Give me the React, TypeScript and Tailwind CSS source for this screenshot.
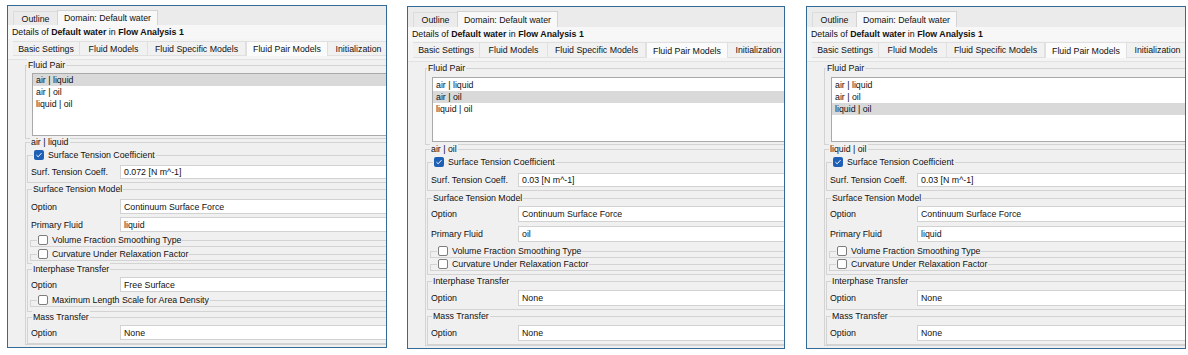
import React from 'react';

type V = 'a' | 'b';

const cfg = {
  a: {
    panel: 'w-[380px]',
    strip: 'h-[19px]',
    tabTop: 'h-[14px]',
    tabTopActive: 'h-[15px]',
    sub: 'h-[21px]',
    tab: 'h-[15px]',
    fpMt: 'mt-[5px]',
    listMt: 'mt-[2px]',
    listH: 'h-[63px]',
    listPt: 'pt-0',
    fpPb: 'pb-[2px]',
    pairMt: 'mt-[3px]',
    stcMt: 'mt-[7px]',
    coefMt: 'mt-[4px]',
    coefH: 'h-[14px]',
    stcPb: 'pb-[3px]',
    stmMt: 'mt-[6px]',
    optMt: 'mt-[4px]',
    rowH: 'h-[15px]',
    primMt: 'mt-[3px]',
    volMt: 'mt-[8px]',
    curvMt: 'mt-[7px]',
    stmPb: 'pb-[2px]',
    itMt: 'mt-[5px]',
    itOptMt: 'mt-[2px]',
    maxMt: 'mt-[8px]',
    itPb: 'pb-[4px]',
    massMt: 'mt-[5px]',
    massOptMt: 'mt-[2px]',
    massPb: 'pb-[3px]',
    lw: 'w-[92px]',
  },
  b: {
    panel: 'w-[378px]',
    strip: 'h-[20px]',
    tabTop: 'h-[15px]',
    tabTopActive: 'h-[16px]',
    sub: 'h-[21px]',
    tab: 'h-[16px]',
    fpMt: 'mt-[6px]',
    listMt: 'mt-[3px]',
    listH: 'h-[65px]',
    listPt: 'pt-[1px]',
    fpPb: 'pb-[2px]',
    pairMt: 'mt-[4px]',
    stcMt: 'mt-[7px]',
    coefMt: 'mt-[5px]',
    coefH: 'h-[14px]',
    stcPb: 'pb-[3px]',
    stmMt: 'mt-[7px]',
    optMt: 'mt-[2px]',
    rowH: 'h-[16px]',
    primMt: 'mt-[4px]',
    volMt: 'mt-[9px]',
    curvMt: 'mt-[6px]',
    stmPb: 'pb-[3px]',
    itMt: 'mt-[6px]',
    itOptMt: 'mt-[3px]',
    maxMt: 'mt-[8px]',
    itPb: 'pb-[3px]',
    massMt: 'mt-[6px]',
    massOptMt: 'mt-[3px]',
    massPb: 'pb-[3px]',
    lw: 'w-[90px]',
  },
};

const panels = [
  { v: 'a' as V, sel: 0, pair: 'air | liquid', coef: '0.072 [N m^-1]', prim: 'liquid', it: 'Free Surface', maxLen: true, cls: 'mt-0' },
  { v: 'b' as V, sel: 1, pair: 'air | oil', coef: '0.03 [N m^-1]', prim: 'oil', it: 'None', maxLen: false, cls: 'mt-[1px] ml-[20px]' },
  { v: 'b' as V, sel: 2, pair: 'liquid | oil', coef: '0.03 [N m^-1]', prim: 'liquid', it: 'None', maxLen: false, cls: 'mt-[1px] ml-[21px] w-[380px]' },
];

const pairs = ['air | liquid', 'air | oil', 'liquid | oil'];
const subTabs = [
  { label: 'Basic Settings', w: 'w-[67px]' },
  { label: 'Fluid Models', w: 'w-[68px]' },
  { label: 'Fluid Specific Models', w: 'w-[98px]' },
  { label: 'Fluid Pair Models', w: 'w-[82px]' },
  { label: 'Initialization', w: 'w-[62px]' },
];

const Check = ({ on }: { on: boolean }) =>
  on ? (
    <span className="flex h-[10px] w-[10px] shrink-0 items-center justify-center rounded-[2px] bg-[#1e60b6]">
      <svg viewBox="0 0 10 10" className="h-[8px] w-[8px]">
        <path d="M1.8 5.2 L4 7.2 L8.2 2.6" fill="none" stroke="#ffffff" strokeWidth="1.2" />
      </svg>
    </span>
  ) : (
    <span className="h-[10px] w-[10px] shrink-0 rounded-[2px] border border-[#7d7d7d] bg-white" />
  );

const Legend = ({ children, ml }: { children: React.ReactNode; ml: string }) => (
  <div className={`-mt-[7px] flex h-[12px] w-fit items-center gap-[4px] bg-[#f0f0f0] px-[1px] leading-[12px] ${ml}`}>
    {children}
  </div>
);

const Row = ({ label, value, h, mt, lw }: { label: string; value: string; h: string; mt: string; lw: string }) => (
  <div className={`flex items-stretch ${h} ${mt}`}>
    <div className={`flex items-center pl-[3px] ${lw}`}>{label}</div>
    <div className="flex flex-1 items-center border-y border-l border-[#d2d2d2] bg-white pl-[3px]">{value}</div>
  </div>
);

const Collapsed = ({ label, mt }: { label: string; mt: string }) => (
  <div className={`ml-[2px] border border-r-0 border-[#d3d3d3] ${mt}`}>
    <Legend ml="ml-[6px]">
      <Check on={false} />
      <span>{label}</span>
    </Legend>
  </div>
);

const Panel = ({ p }: { p: (typeof panels)[number] }) => {
  const c = cfg[p.v];
  return (
    <div className={`h-[343px] shrink-0 overflow-hidden border border-[#346a98] bg-[#f0f0f0] ${c.panel} ${p.cls}`}>
      <div className={`flex items-end bg-[#ebebeb] pl-[5px] ${c.strip}`}>
        <div className={`flex w-[44px] items-center justify-center border-t border-l border-[#dcdcdc] ${c.tabTop}`}>Outline</div>
        <div className={`flex w-[101px] items-center justify-center border border-b-0 border-[#d4d4d4] bg-[#f8f8f8] ${c.tabTopActive}`}>
          Domain: Default water
        </div>
      </div>
      <div className="flex h-[14px] items-center bg-[#f7f7f7] pl-[4px]">
        <span className="whitespace-nowrap">
          Details of <b>Default water</b> in <b>Flow Analysis 1</b>
        </span>
      </div>
      <div className={`flex items-end border-b border-[#e2e2e2] bg-[#f4f4f4] pl-[5px] ${c.sub}`}>
        <div className="mb-[3px] flex">
          {subTabs.map((t, i) => (
            <div
              key={t.label}
              className={`flex shrink-0 items-center justify-center whitespace-nowrap border border-[#e0e0e0] ${t.w} ${c.tab} ${
                i === 3 ? 'border-b-0 bg-[#fbfbfb]' : 'border-l-0 bg-[#f1f1f1]'
              } ${i === 4 ? 'border-l-0' : ''}`}
            >
              {t.label}
            </div>
          ))}
        </div>
      </div>

      <div className="w-[440px] whitespace-nowrap">
        {/* Fluid Pair */}
        <div className={`ml-[17px] border border-r-0 border-[#d3d3d3] ${c.fpMt} ${c.fpPb}`}>
          <Legend ml="ml-[1px]">Fluid Pair</Legend>
          <div className={`ml-[6px] border border-r-0 border-[#a9a9a9] bg-white ${c.listMt} ${c.listH} ${c.listPt}`}>
            {pairs.map((s, i) => (
              <div key={s} className={`flex h-[12px] items-center pl-[3px] ${i === p.sel ? 'bg-[#d9d9d9]' : ''}`}>
                {s}
              </div>
            ))}
          </div>
        </div>

        {/* Pair */}
        <div className={`ml-[17px] border border-r-0 border-[#d3d3d3] ${c.pairMt}`}>
          <Legend ml="ml-[4px]">{p.pair}</Legend>

          <div className={`ml-[1px] border border-r-0 border-[#d3d3d3] ${c.stcMt} ${c.stcPb}`}>
            <Legend ml="ml-[5px]">
              <Check on />
              <span>Surface Tension Coefficient</span>
            </Legend>
            <Row label="Surf. Tension Coeff." value={p.coef} h={c.coefH} mt={c.coefMt} lw={c.lw} />
          </div>

          <div className={`ml-[1px] border border-r-0 border-[#d3d3d3] ${c.stmMt} ${c.stmPb}`}>
            <Legend ml="ml-[4px]">Surface Tension Model</Legend>
            <Row label="Option" value="Continuum Surface Force" h={c.rowH} mt={c.optMt} lw={c.lw} />
            <Row label="Primary Fluid" value={p.prim} h={c.rowH} mt={c.primMt} lw={c.lw} />
            <Collapsed label="Volume Fraction Smoothing Type" mt={c.volMt} />
            <Collapsed label="Curvature Under Relaxation Factor" mt={c.curvMt} />
          </div>

          <div className={`ml-[1px] border border-r-0 border-[#d3d3d3] ${c.itMt} ${c.itPb}`}>
            <Legend ml="ml-[4px]">Interphase Transfer</Legend>
            <Row label="Option" value={p.it} h={c.rowH} mt={c.itOptMt} lw={c.lw} />
            {p.maxLen && <Collapsed label="Maximum Length Scale for Area Density" mt={c.maxMt} />}
          </div>

          <div className={`ml-[1px] border border-r-0 border-[#d3d3d3] ${c.massMt} ${c.massPb}`}>
            <Legend ml="ml-[4px]">Mass Transfer</Legend>
            <Row label="Option" value="None" h={c.rowH} mt={c.massOptMt} lw={c.lw} />
          </div>
        </div>
      </div>
    </div>
  );
};

export default function App() {
  return (
    <div className="flex h-[355px] w-[1188px] items-start bg-white pt-[5px] pl-[7px] font-['Liberation_Sans',Arial,sans-serif] text-[8.8px] leading-[12px] text-[#111]">
      {panels.map((p, i) => (
        <Panel key={i} p={p} />
      ))}
    </div>
  );
}
